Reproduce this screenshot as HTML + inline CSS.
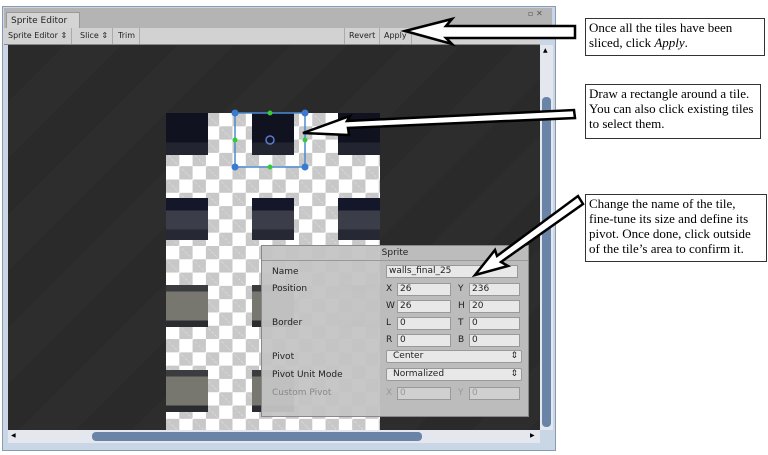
<!DOCTYPE html>
<html><head><meta charset="utf-8"><style>
body{margin:0;width:768px;height:455px;background:#fff;position:relative;overflow:hidden;font-family:"DejaVu Sans","Liberation Sans",sans-serif;}
.abs{position:absolute}
.win{left:2px;top:6px;width:552px;height:443px;background:#c9d6e6;border:1px solid #8a9ab0;}
.tabbar{left:4px;top:8px;width:548px;height:20px;background:#b4b4b4;}
.tab{left:6px;top:12px;width:68px;height:16px;background:#d4d4d4;border:1px solid #999;border-bottom:none;font-size:9px;line-height:16px;padding-left:4px;color:#222}
.tool{left:4px;top:28px;width:536px;height:16px;background:#d2d2d2;border-bottom:1px solid #888;font-size:8px;line-height:16px;color:#222}
.tool span{position:absolute;top:0;padding:0 4px;border-right:1px solid #aaa}
.canvas{left:8px;top:45px;width:532px;height:385px;background:repeating-linear-gradient(135deg,#2a2a2a 0 40px,#2d2d2d 40px 80px);}
.sprite{left:166px;top:113px;width:214px;height:317px;background-color:#fff;background-image:linear-gradient(45deg,#c8c8c8 25%,transparent 25%,transparent 75%,#c8c8c8 75%),linear-gradient(45deg,#c8c8c8 25%,transparent 25%,transparent 75%,#c8c8c8 75%);background-size:26.6px 26.6px;background-position:0 0,13.3px 13.3px;}
.t{position:absolute;width:42px;height:42px;}
.d{background:linear-gradient(#10121f 0 70%,#22242f 70%)}
.m{background:linear-gradient(#14172a 0 30%,#3b3d48 30% 75%,#262833 75%)}
.g{background:linear-gradient(#3a3c40 0 15%,#77776f 15% 85%,#2a2c30 85%)}
.vs{left:540px;top:45px;width:13px;height:385px;background:#e4e8ee;}
.hs{left:8px;top:430px;width:532px;height:13px;background:#e4e8ee;}
.panel{left:261px;top:245px;width:266px;height:170px;background:rgba(196,196,196,.95);border:1px solid #888;font-size:9px;color:#222}
.panel .l{position:absolute;left:10px}
.f{position:absolute;height:11px;background:#e8e8e8;border:1px solid #999;font-size:9px;line-height:11px;padding-left:2px}
.box{position:absolute;border:1px solid #333;background:#fff;font-family:"Liberation Serif",serif;font-size:13px;line-height:15px;padding:1px 3px;color:#000}
</style></head><body>
<div class="abs win"></div>
<div class="abs tabbar"></div>
<div class="abs tab">Sprite Editor</div>
<div class="abs" style="left:528px;top:9px;font-size:8px;color:#555">▫ ✕</div>
<div class="abs tool">
<span style="left:0">Sprite Editor ⇕</span><span style="left:72px">Slice ⇕</span><span style="left:110px">Trim</span>
<span style="left:340px;border-left:1px solid #aaa">Revert</span><span style="left:376px">Apply</span>
</div>
<div class="abs canvas"></div>
<div class="abs sprite">
<div class="t d" style="left:0;top:0"></div><div class="t d" style="left:86px;top:0"></div><div class="t d" style="left:172px;top:0"></div>
<div class="t m" style="left:0;top:85px"></div><div class="t m" style="left:86px;top:85px"></div><div class="t m" style="left:172px;top:85px"></div>
<div class="t g" style="left:0;top:172px"></div><div class="t g" style="left:86px;top:172px"></div><div class="t g" style="left:172px;top:172px;opacity:.3"></div>
<div class="t g" style="left:0;top:257px"></div><div class="t g" style="left:86px;top:257px"></div>
</div>
<svg class="abs" style="left:0;top:0" width="768" height="455">
<rect x="235" y="113" width="70" height="54" fill="none" stroke="#4a8ad0" stroke-width="1.5"/>
<circle cx="235" cy="113" r="3.5" fill="#3a7ad0"/><circle cx="305" cy="113" r="3.5" fill="#3a7ad0"/><circle cx="235" cy="167" r="3.5" fill="#3a7ad0"/><circle cx="305" cy="167" r="3.5" fill="#3a7ad0"/>
<circle cx="270" cy="113" r="2.5" fill="#3c3"/><circle cx="270" cy="167" r="2.5" fill="#3c3"/><circle cx="235" cy="140" r="2.5" fill="#3c3"/><circle cx="305" cy="140" r="2.5" fill="#3c3"/>
<circle cx="270" cy="140" r="4" fill="none" stroke="#5a7ad0" stroke-width="1.5"/>
</svg>
<div class="abs vs"><div class="abs" style="left:2px;top:52px;width:9px;height:330px;background:#6a84a8;border-radius:4px"></div><div class="abs" style="left:3px;top:2px;font-size:6px">▲</div></div>
<div class="abs hs"><div class="abs" style="left:84px;top:2px;width:330px;height:9px;background:#6a84a8;border-radius:4px"></div><div class="abs" style="left:3px;top:2px;font-size:6px">◀</div><div class="abs" style="left:522px;top:2px;font-size:6px">▶</div></div>
<div class="abs panel">
<div class="abs" style="left:0;width:266px;top:2px;text-align:center">Sprite</div>
<div class="abs" style="left:0;width:266px;top:14px;border-top:1px solid #999"></div>
<div class="l" style="top:21px">Name</div><div class="f" style="left:124px;top:19px;width:128px">walls_final_25</div>
<div class="l" style="top:38px">Position</div>
<div class="abs" style="left:124px;top:38px">X</div><div class="f" style="left:135px;top:37px;width:50px">26</div>
<div class="abs" style="left:196px;top:38px">Y</div><div class="f" style="left:207px;top:37px;width:47px">236</div>
<div class="abs" style="left:124px;top:55px">W</div><div class="f" style="left:135px;top:54px;width:50px">26</div>
<div class="abs" style="left:196px;top:55px">H</div><div class="f" style="left:207px;top:54px;width:47px">20</div>
<div class="l" style="top:72px">Border</div>
<div class="abs" style="left:124px;top:72px">L</div><div class="f" style="left:135px;top:71px;width:50px">0</div>
<div class="abs" style="left:196px;top:72px">T</div><div class="f" style="left:207px;top:71px;width:47px">0</div>
<div class="abs" style="left:124px;top:89px">R</div><div class="f" style="left:135px;top:88px;width:50px">0</div>
<div class="abs" style="left:196px;top:89px">B</div><div class="f" style="left:207px;top:88px;width:47px">0</div>
<div class="l" style="top:106px">Pivot</div><div class="f" style="left:124px;top:104px;width:128px;border-radius:2px;padding-left:6px">Center<span style="float:right;padding-right:3px">⇕</span></div>
<div class="l" style="top:124px">Pivot Unit Mode</div><div class="f" style="left:124px;top:122px;width:128px;border-radius:2px;padding-left:6px">Normalized<span style="float:right;padding-right:3px">⇕</span></div>
<div class="l" style="top:142px;color:#888">Custom Pivot</div>
<div class="abs" style="left:124px;top:142px;color:#999">X</div><div class="f" style="left:135px;top:141px;width:50px;color:#999;background:#d0d0d0">0</div>
<div class="abs" style="left:196px;top:142px;color:#999">Y</div><div class="f" style="left:207px;top:141px;width:47px;color:#999;background:#d0d0d0">0</div>
</div>
<svg class="abs" style="left:0;top:0" width="768" height="455">
<polygon points="405,31 452,19 446,26 575,26 575,38 446,38 452,44" fill="#fff" stroke="#000" stroke-width="2.5"/>
<polygon points="303,133 350,116 347,121 574,110 575,118 348,128 349,135" fill="#fff" stroke="#000" stroke-width="2.5"/>
<polygon points="475,275 495,250 497,256 578,196 583,204 501,262 508,266" fill="#fff" stroke="#000" stroke-width="2.5"/>
</svg>
<div class="box" style="left:585px;top:18px;width:172px;height:34px">Once all the tiles have been sliced, click <i>Apply</i>.</div>
<div class="box" style="left:585px;top:84px;width:168px;height:51px">Draw a rectangle around a tile. You can also click existing tiles to select them.</div>
<div class="box" style="left:585px;top:194px;width:174px;height:64px">Change the name of the tile, fine-tune its size and define its pivot. Once done, click outside of the tile’s area to confirm it.</div>
</body></html>
